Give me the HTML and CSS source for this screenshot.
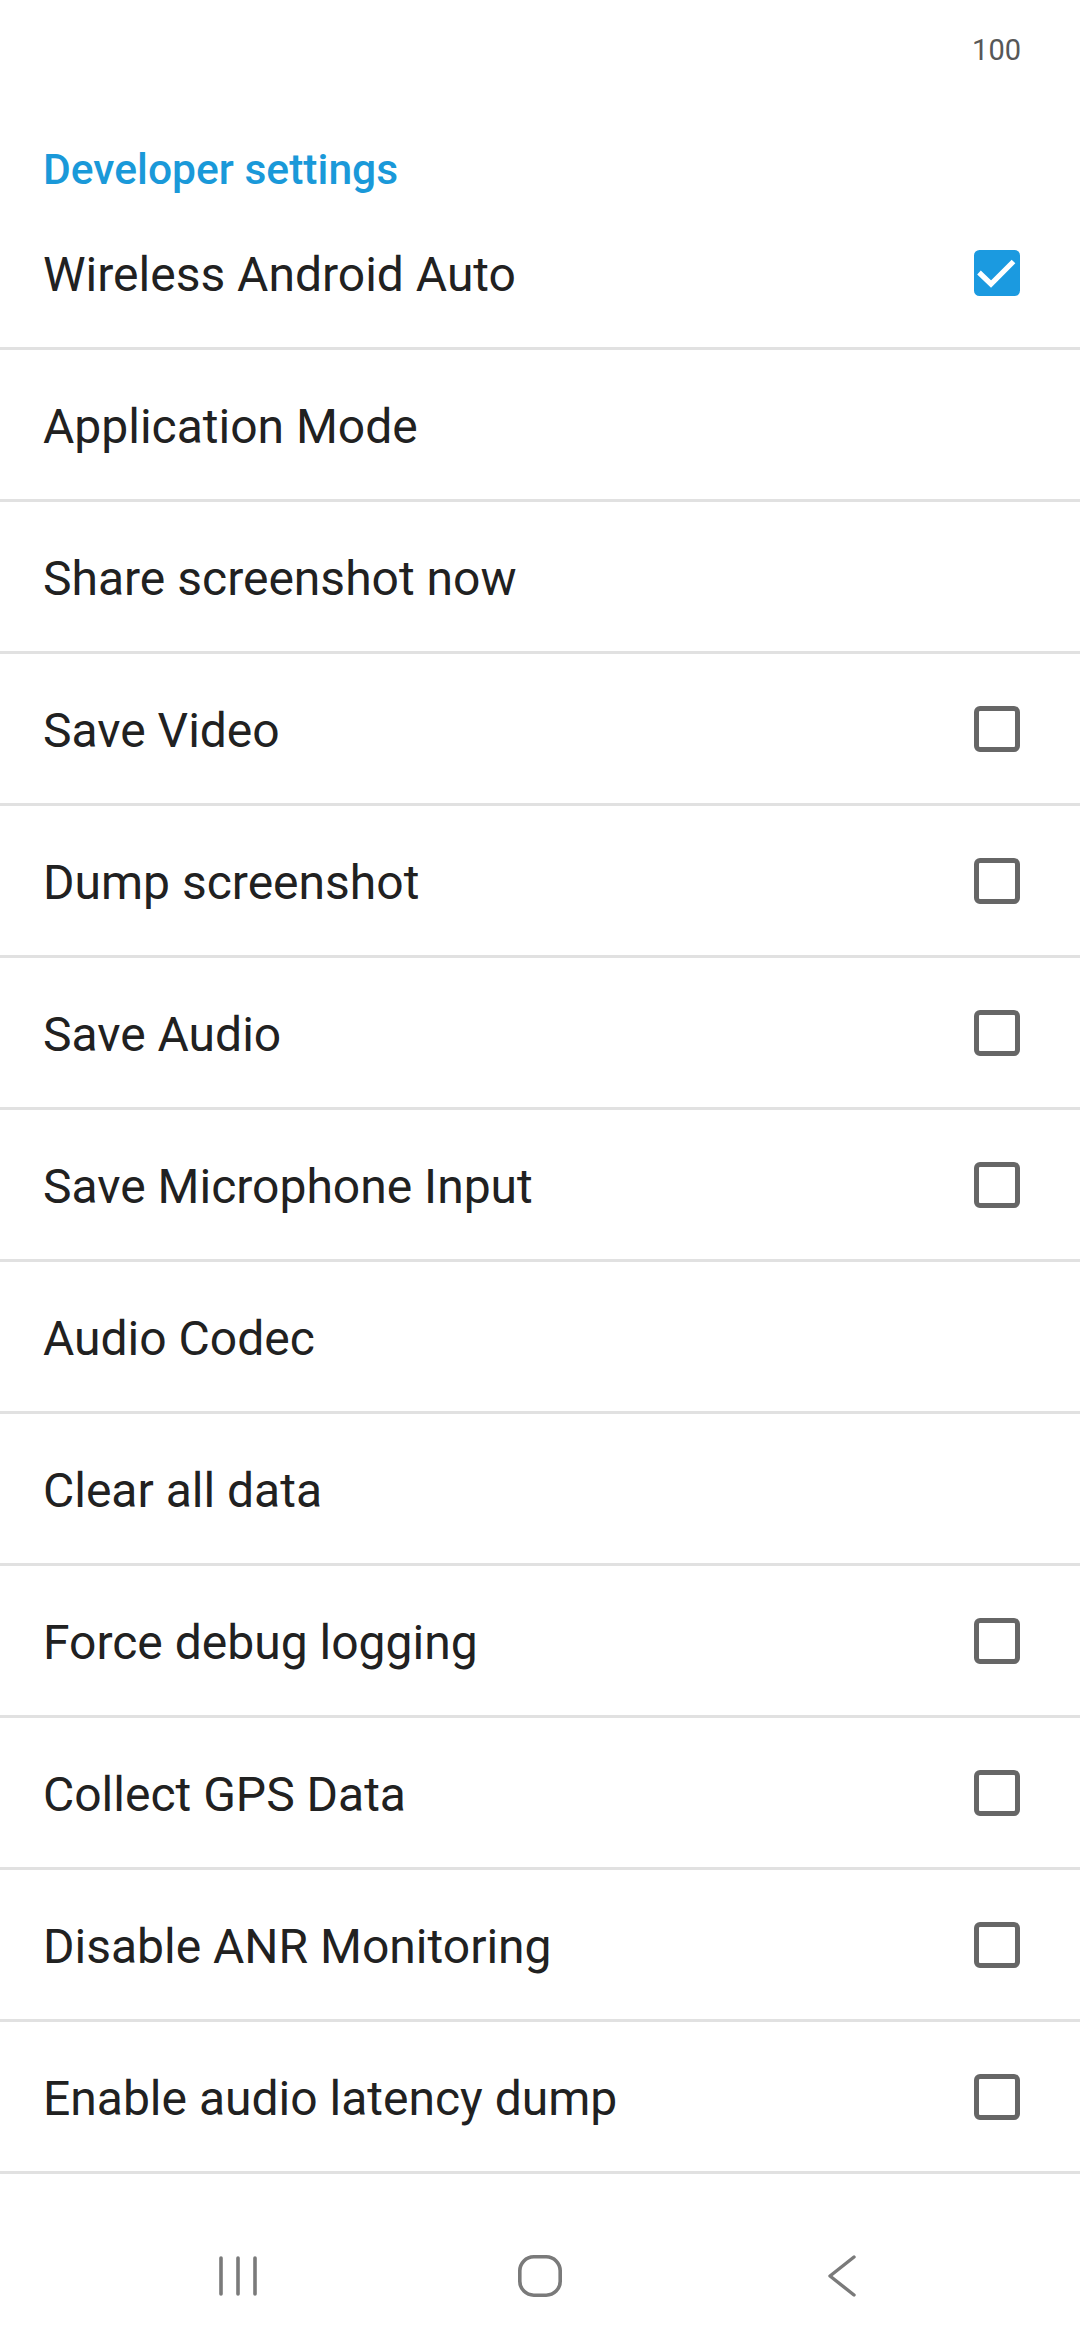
FILE: index.html
```html
<!DOCTYPE html>
<html lang="en">
<head>
<meta charset="utf-8">
<title>Developer settings</title>
<link rel="stylesheet" href="styles.css">
</head>
<body>
<div class="screen">
  <div class="status"><span class="status-num">100</span></div>
  <div class="section-header">Developer settings</div>
  <ul class="prefs">
    <li class="pref"><span class="pref-title">Wireless Android Auto</span>
      <svg class="cb" viewBox="0 0 46 46"><rect x="0" y="0" width="46" height="46" rx="5.5" fill="#1b9ae0"/><polyline points="5,22.5 17,34 39.5,11.5" fill="none" stroke="#fff" stroke-width="5.2"/></svg></li>
    <li class="pref"><span class="pref-title">Application Mode</span></li>
    <li class="pref"><span class="pref-title">Share screenshot now</span></li>
    <li class="pref"><span class="pref-title">Save Video</span>
      <svg class="cb" viewBox="0 0 46 46"><rect x="2.5" y="2.5" width="41" height="41" rx="3.5" fill="none" stroke="#666" stroke-width="5"/></svg></li>
    <li class="pref"><span class="pref-title">Dump screenshot</span>
      <svg class="cb" viewBox="0 0 46 46"><rect x="2.5" y="2.5" width="41" height="41" rx="3.5" fill="none" stroke="#666" stroke-width="5"/></svg></li>
    <li class="pref"><span class="pref-title">Save Audio</span>
      <svg class="cb" viewBox="0 0 46 46"><rect x="2.5" y="2.5" width="41" height="41" rx="3.5" fill="none" stroke="#666" stroke-width="5"/></svg></li>
    <li class="pref"><span class="pref-title">Save Microphone Input</span>
      <svg class="cb" viewBox="0 0 46 46"><rect x="2.5" y="2.5" width="41" height="41" rx="3.5" fill="none" stroke="#666" stroke-width="5"/></svg></li>
    <li class="pref"><span class="pref-title">Audio Codec</span></li>
    <li class="pref"><span class="pref-title">Clear all data</span></li>
    <li class="pref"><span class="pref-title">Force debug logging</span>
      <svg class="cb" viewBox="0 0 46 46"><rect x="2.5" y="2.5" width="41" height="41" rx="3.5" fill="none" stroke="#666" stroke-width="5"/></svg></li>
    <li class="pref"><span class="pref-title">Collect GPS Data</span>
      <svg class="cb" viewBox="0 0 46 46"><rect x="2.5" y="2.5" width="41" height="41" rx="3.5" fill="none" stroke="#666" stroke-width="5"/></svg></li>
    <li class="pref"><span class="pref-title">Disable ANR Monitoring</span>
      <svg class="cb" viewBox="0 0 46 46"><rect x="2.5" y="2.5" width="41" height="41" rx="3.5" fill="none" stroke="#666" stroke-width="5"/></svg></li>
    <li class="pref"><span class="pref-title">Enable audio latency dump</span>
      <svg class="cb" viewBox="0 0 46 46"><rect x="2.5" y="2.5" width="41" height="41" rx="3.5" fill="none" stroke="#666" stroke-width="5"/></svg></li>
  </ul>
  <div class="navbar">
    <div class="nav-btn">
      <svg class="nav-icon" width="40" height="42" viewBox="0 0 40 42"><g stroke="#7a7a7a" stroke-width="3.6" stroke-linecap="round"><line x1="3" y1="3" x2="3" y2="39"/><line x1="20" y1="3" x2="20" y2="39"/><line x1="37" y1="3" x2="37" y2="39"/></g></svg>
    </div>
    <div class="nav-btn">
      <svg class="nav-icon" width="44" height="42" viewBox="0 0 44 42"><rect x="1.8" y="1.8" width="40.4" height="38.4" rx="14" fill="none" stroke="#7a7a7a" stroke-width="3.6"/></svg>
    </div>
    <div class="nav-btn">
      <svg class="nav-icon" width="28" height="42" viewBox="0 0 28 42"><polyline points="26,2 2,21 26,40" fill="none" stroke="#7a7a7a" stroke-width="3.4" stroke-linecap="round" stroke-linejoin="round"/></svg>
    </div>
  </div>
</div>
</body>
</html>
```

FILE: styles.css
```css
html, body {
  margin: 0;
  padding: 0;
  background: #ffffff;
}

body {
  font-family: Roboto, "Noto Sans", "Liberation Sans", sans-serif;
  -webkit-font-smoothing: antialiased;
}

.screen {
  width: 1080px;
  height: 2340px;
  display: flex;
  flex-direction: column;
  overflow: hidden;
  background: #ffffff;
}

.status {
  height: 100px;
  box-sizing: border-box;
  padding: 36px 59px 0 0;
  display: flex;
  justify-content: flex-end;
  align-items: flex-start;
}

.status-num {
  font-size: 29px;
  line-height: 29px;
  color: #575757;
}

.section-header {
  height: 98px;
  box-sizing: border-box;
  padding: 48px 0 0 43px;
  font-size: 42.6px;
  line-height: 42px;
  font-weight: 500;
  color: #1a99d9;
}

.prefs {
  list-style: none;
  margin: 0;
  padding: 0;
}

.pref {
  height: 152px;
  box-sizing: border-box;
  border-bottom: 3px solid #e1e1e1;
  display: flex;
  align-items: center;
  justify-content: space-between;
  padding: 0 60px 0 43px;
}

.pref-title {
  font-size: 48px;
  line-height: 56px;
  color: #212121;
  padding-top: 5px;
}

.cb {
  width: 46px;
  height: 46px;
  flex: none;
}

.navbar {
  flex: 1;
  display: flex;
  justify-content: center;
  align-items: flex-start;
  gap: 182px;
  padding-top: 81px;
}

.nav-btn {
  width: 120px;
  display: flex;
  justify-content: center;
}

.nav-icon {
  display: block;
}
```
